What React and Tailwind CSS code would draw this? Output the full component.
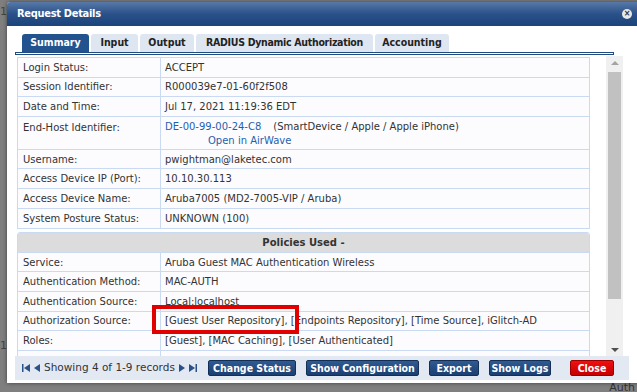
import React from "react";

const bold = { fontFamily: '"DejaVu Sans Condensed", "DejaVu Sans", Verdana, sans-serif' };

const rows1 = [
  ["Login Status:", "ACCEPT"],
  ["Session Identifier:", "R000039e7-01-60f2f508"],
  ["Date and Time:", "Jul 17, 2021 11:19:36 EDT"],
];

const rows2 = [
  ["Username:", "pwightman@laketec.com"],
  ["Access Device IP (Port):", "10.10.30.113"],
  ["Access Device Name:", "Aruba7005 (MD2-7005-VIP / Aruba)"],
  ["System Posture Status:", "UNKNOWN (100)"],
];

const policies = [
  ["Service:", "Aruba Guest MAC Authentication Wireless"],
  ["Authentication Method:", "MAC-AUTH"],
  ["Authentication Source:", "Local:localhost"],
  ["Authorization Source:", "[Guest User Repository], [Endpoints Repository], [Time Source], iGlitch-AD"],
  ["Roles:", "[Guest], [MAC Caching], [User Authenticated]"],
  ["Enforcement Profiles:", "[Allow Internet Access Profile]"],
];

const Row = ({ label, value }) => (
  <div className="flex h-[19.6px] border-b border-[#cbdaf3] last:border-b-0">
    <div className="w-[143px] shrink-0 border-r border-[#cbdaf3] pl-[5px] flex items-center text-[#333]">
      {label}
    </div>
    <div className="pl-[4px] flex items-center text-[#333] whitespace-nowrap">{value}</div>
  </div>
);

const Btn = ({ children, red, w }) => (
  <button
    style={bold}
    className={
      "h-[16px] rounded-[2px] text-white font-bold text-[10.5px] leading-none border whitespace-nowrap flex items-center justify-center " +
      w +
      " " +
      (red
        ? "bg-gradient-to-b from-[#f01010] to-[#c50000] border-[#9a0000]"
        : "bg-gradient-to-b from-[#2f5a93] to-[#1b3f70] border-[#142f55]")
    }
  >
    {children}
  </button>
);

const Tab = ({ children, active, w }) => (
  <div
    style={bold}
    className={
      "h-[18px] rounded-t-[3px] font-bold text-[10.5px] flex items-center justify-center whitespace-nowrap " +
      w +
      " " +
      (active ? "bg-[#22538f] text-white" : "bg-[#dde6f1] text-[#222]")
    }
  >
    {children}
  </div>
);

export default function App() {
  return (
    <div
      className="w-[637px] h-[392px] bg-[#7f7f7f] overflow-hidden relative"
      style={{ fontFamily: '"DejaVu Sans", Verdana, sans-serif' }}
    >
      <div className="absolute left-0 top-[4px] text-[11px] text-[#444]">1.C</div>
      <div className="absolute left-0 top-[338px] text-[11px] text-[#444]">1.0</div>
      <div className="absolute right-[2px] top-[380px] text-[11px] text-[#333]">Auth</div>

      <div className="absolute left-[7px] top-[2px] w-[636px] h-[381px] bg-white rounded-t-[3px] shadow-[0_0_4px_rgba(0,0,0,0.5)] text-[10px]">
        <div className="h-[24px] rounded-t-[3px] bg-gradient-to-b from-[#5878a8] via-[#2a5189] to-[#1b447b] flex items-center justify-between pl-[10px] pr-[11px]">
          <span style={bold} className="text-white font-bold text-[11px] tracking-[-0.3px]">Request Details</span>
          <span className="w-[10px] h-[10px] rounded-full bg-[#e8e8e8] flex items-center justify-center text-[#333] text-[8px] leading-none font-bold">
            ×
          </span>
        </div>

        <div className="pl-[8px] pt-[7px]">
          <div className="flex items-end pl-[7px] h-[19px] gap-[2px]">
            <Tab active w="w-[67px]">Summary</Tab>
            <Tab w="w-[47px]">Input</Tab>
            <Tab w="w-[54px]">Output</Tab>
            <Tab w="w-[177px]"><span className="tracking-[-0.3px]">RADIUS Dynamic Authorization</span></Tab>
            <Tab w="w-[74px]">Accounting</Tab>
          </div>
          <div className="w-[599px] h-[3px] border border-[#1f4a80] bg-white"></div>

          <div className="flex mt-[1px] h-[300px]">
            <div className="w-[583px] overflow-hidden pl-[2px] pt-[1px] relative">
              <div className="w-[573px] border border-[#cbdaf3] bg-[#fcfcff]">
                {rows1.map(([l, v]) => (
                  <Row key={l} label={l} value={v} />
                ))}
                <div className="flex h-[33px] border-b border-[#cbdaf3]">
                  <div className="w-[143px] shrink-0 border-r border-[#cbdaf3] pl-[5px] pt-[3px] text-[#333]">End-Host Identifier:</div>
                  <div className="pl-[4px] pt-[3px] text-[#333] leading-[14px]">
                    <div>
                      <span className="text-[#1f5fae]">DE-00-99-00-24-C8</span>
                      <span className="ml-[12px]">(SmartDevice / Apple / Apple iPhone)</span>
                    </div>
                    <div className="pl-[43px] text-[#1f5fae]">Open in AirWave</div>
                  </div>
                </div>
                {rows2.map(([l, v]) => (
                  <Row key={l} label={l} value={v} />
                ))}
              </div>

              <div className="w-[573px] mt-[3px] border border-[#cbdaf3] bg-[#fcfcff] rounded-t-[3px]">
                <div className="h-[19.6px] bg-[#dcdcdc] flex items-center justify-center font-bold text-[#333] rounded-t-[2px] border-b border-[#cbdaf3]">
                  Policies Used -
                </div>
                {policies.map(([l, v]) => (
                  <Row key={l} label={l} value={v} />
                ))}
              </div>

              <div className="absolute left-[137px] top-[249px] w-[147px] h-[29px] border-[4px] border-[#e00000]"></div>
            </div>

            <div className="ml-[8px] w-[17px] bg-[#f0f0f0] flex flex-col items-center">
              <div className="h-[14px] flex items-center justify-center">
                <div className="w-0 h-0 border-l-[4px] border-r-[4px] border-b-[4px] border-l-transparent border-r-transparent border-b-[#a3a3a3]"></div>
              </div>
              <div className="w-[13px] h-[227px] bg-[#c1c1c1] mt-[2px]"></div>
              <div className="flex-1"></div>
              <div className="h-[12px] flex items-center justify-center">
                <div className="w-0 h-0 border-l-[4px] border-r-[4px] border-t-[4px] border-l-transparent border-r-transparent border-t-[#505050]"></div>
              </div>
            </div>
          </div>

          <div className="w-[614px] h-[24px] bg-[#e3e9f3] flex items-center pl-[7px]">
            <div className="flex items-center text-[#333] gap-[4px] w-[186px] shrink-0">
              <svg width="8" height="8" viewBox="0 0 8 8">
                <rect x="0" y="0" width="1.5" height="8" fill="#2a5189" />
                <polygon points="8,0 2,4 8,8" fill="#2a5189" />
              </svg>
              <svg width="6" height="8" viewBox="0 0 6 8">
                <polygon points="6,0 0,4 6,8" fill="#2a5189" />
              </svg>
              <span className="text-[10.5px] whitespace-nowrap">Showing 4 of 1-9 records</span>
              <svg width="6" height="8" viewBox="0 0 6 8">
                <polygon points="0,0 6,4 0,8" fill="#2a5189" />
              </svg>
              <svg width="8" height="8" viewBox="0 0 8 8">
                <polygon points="0,0 6,4 0,8" fill="#2a5189" />
                <rect x="6.5" y="0" width="1.5" height="8" fill="#2a5189" />
              </svg>
            </div>
            <div className="flex items-center">
              <Btn w="w-[88px]">Change Status</Btn>
              <div className="ml-[10px]"><Btn w="w-[113px]">Show Configuration</Btn></div>
              <div className="ml-[10px]"><Btn w="w-[50px]">Export</Btn></div>
              <div className="ml-[10px]"><Btn w="w-[62px]">Show Logs</Btn></div>
              <div className="ml-[19px]"><Btn red w="w-[44px]">Close</Btn></div>
            </div>
          </div>
        </div>
      </div>
    </div>
  );
}
